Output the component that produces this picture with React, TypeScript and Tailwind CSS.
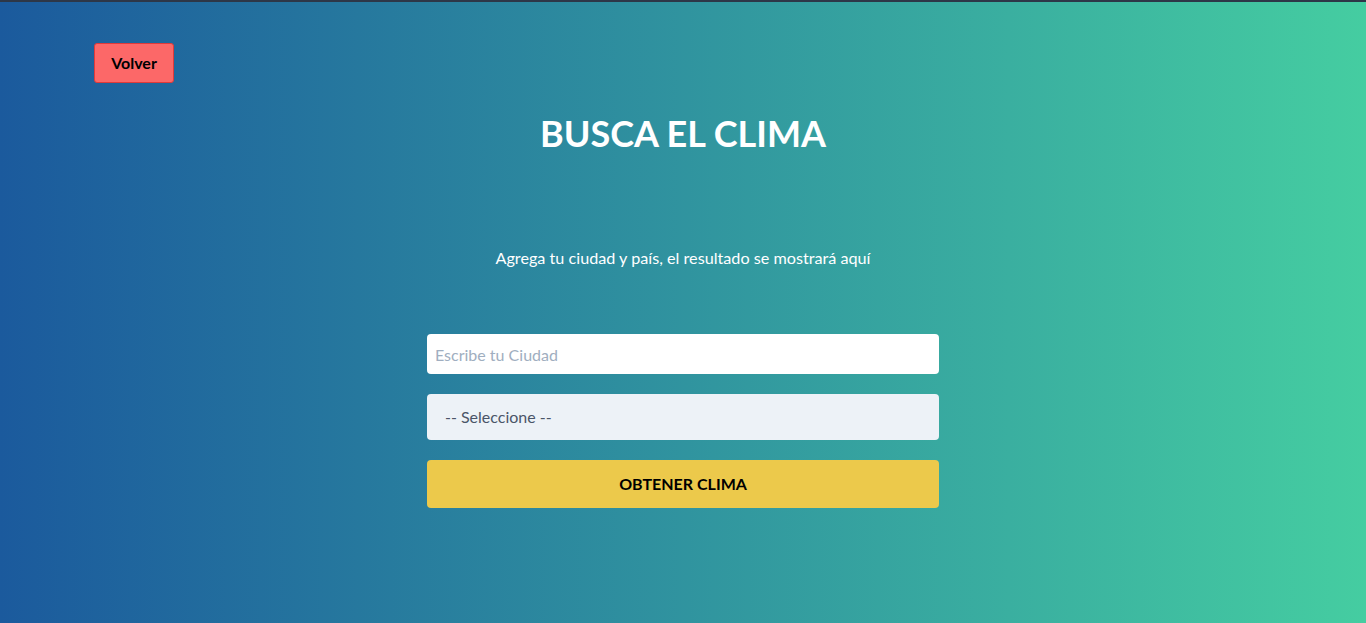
import React from "react";

export default function App() {
  return (
    <div
      className="w-full min-h-[623px] flex flex-col border-t-2 border-[#2d3748] bg-[linear-gradient(to_right,#1b5a9d,#45cda1)] text-white"
      style={{ fontFamily: "Lato, 'Noto Sans', sans-serif" }}
    >
      <div className="pl-[94px] pt-[41px]">
        <button className="w-[80px] h-[40px] rounded-[3px] bg-[#fc6868] border border-[#e03a3a] text-black font-bold text-[16px]">
          Volver
        </button>
      </div>
      <h1 className="mt-[28px] text-center text-[36px] font-bold leading-[44px]">BUSCA EL CLIMA</h1>
      <p className="mt-[91px] text-center text-[16.2px] leading-[24px]">
        Agrega tu ciudad y país, el resultado se mostrará aquí
      </p>
      <form className="mt-[64px] mx-auto w-[512px] flex flex-col">
        <input
          type="text"
          placeholder="Escribe tu Ciudad"
          className="h-[40px] w-full rounded bg-white px-2 text-[16px] text-gray-700 placeholder:text-[#a0aec0] outline-none"
        />
        <div className="mt-[20px] h-[46px] w-full rounded bg-[#edf2f7] pl-[18px] flex items-center text-[16px] text-[#4a5568]">
          -- Seleccione --
        </div>
        <button
          type="button"
          className="mt-[20px] h-[48px] w-full rounded bg-[#ecc94b] text-black font-bold text-[16px] uppercase"
        >
          Obtener Clima
        </button>
      </form>
    </div>
  );
}
